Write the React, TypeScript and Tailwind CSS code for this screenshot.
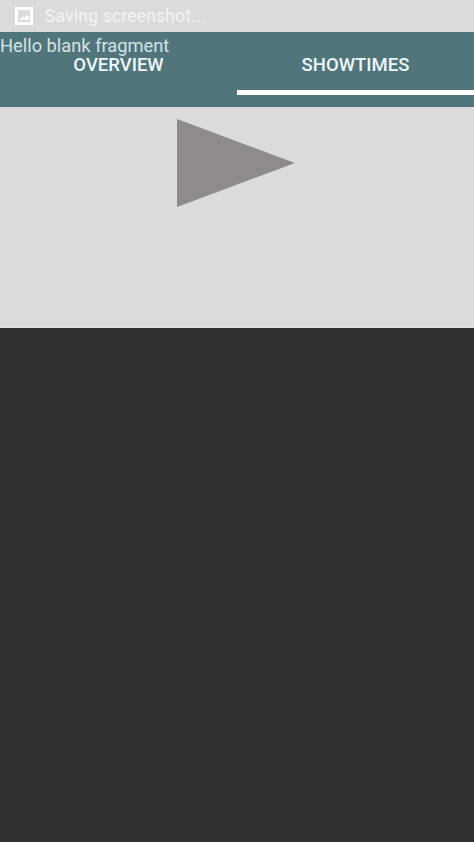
const tabs = [
  { label: "OVERVIEW", active: false },
  { label: "SHOWTIMES", active: true },
];

function ScreenshotIcon() {
  return (
    <svg width="18" height="18" viewBox="0 0 18 18" className="shrink-0">
      <path fillRule="evenodd" fill="#ffffff" d="M0 0h18v18H0zM3 3v12h12V3z" />
      <path fill="#ffffff" opacity="0.8" d="M4 13l3.500-4 2 2 2.500-3.500 2 2V13z" />
    </svg>
  );
}

export default function App() {
  return (
    <div className="flex h-[842px] w-full flex-col overflow-hidden bg-[#303030] font-['Roboto',sans-serif]">
      <div className="flex h-8 shrink-0 items-center bg-[#dcdadb] pl-[15px]">
        <ScreenshotIcon />
        <span className="ml-3 text-[17.500px] tracking-[0.2px] text-[#f4f3f3]">Saving screenshot...</span>
      </div>

      <div className="relative flex h-[75px] shrink-0 bg-[#50757b]">
        {tabs.map((tab) => (
          <div key={tab.label} className="flex h-[63px] flex-1 flex-col">
            <div className="flex flex-1 items-center justify-center pt-[10px] text-[18.500px] font-medium text-[#eef7f8]">
              {tab.label}
            </div>
            <div className={tab.active ? "h-[5px] bg-white" : "h-[5px]"} />
          </div>
        ))}
        <span className="absolute left-0 top-0 text-[18.300px] text-[#d5e2e4]">Hello blank fragment</span>
      </div>

      <div className="flex h-[221px] shrink-0 justify-center border-b border-[#e6e4e5] bg-[#dcdadb] pt-3">
        <svg width="120" height="90" viewBox="0 0 120 90" className="-ml-[3px]">
          <polygon points="1,0 119,44 1,88" fill="#8f8b8a" />
        </svg>
      </div>
    </div>
  );
}
